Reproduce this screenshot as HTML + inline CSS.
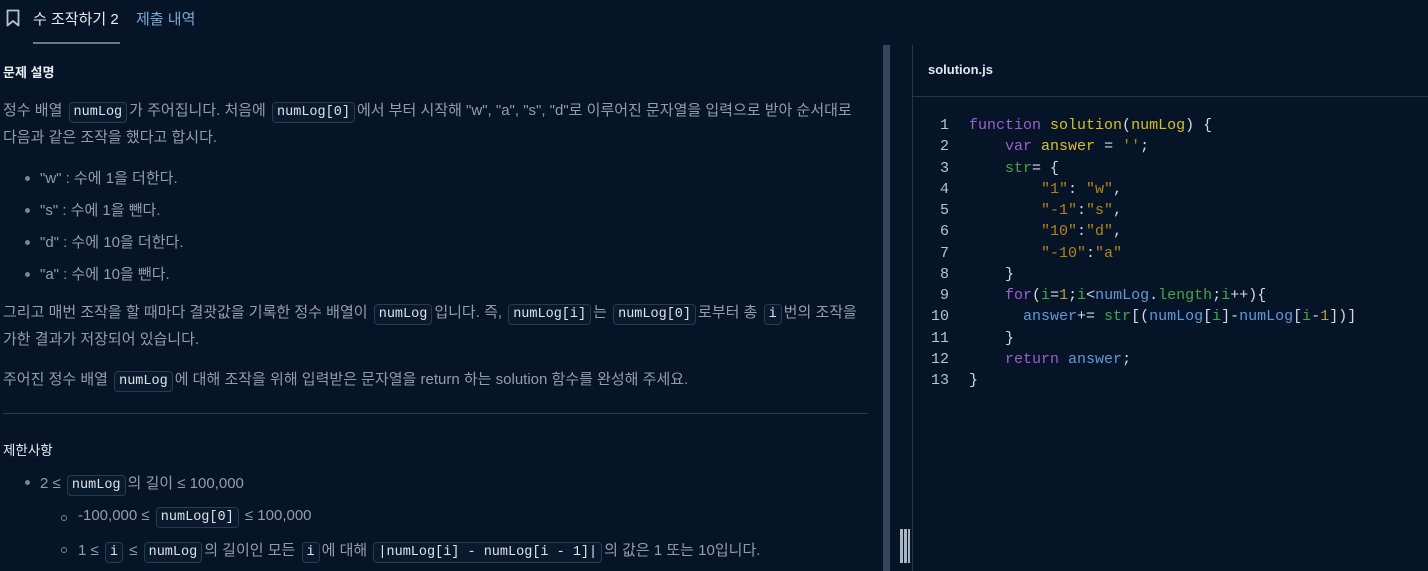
<!DOCTYPE html>
<html><head><meta charset="utf-8"><style>
*{margin:0;padding:0;box-sizing:border-box}
body{width:1428px;height:571px;overflow:hidden;background:#051427;font-family:"Liberation Sans","Noto Sans CJK KR",sans-serif;color:#949eaa;position:relative}
.abs{position:absolute;white-space:nowrap}
.tab{font-size:15px;top:8px}
code{font-family:"Liberation Mono",monospace;font-size:13.5px;color:#dde3ea;background:#0a1a2e;border:1px solid #2b3a4d;border-radius:4px;padding:2px 4px;margin:0 2px}
.p{font-size:15px;left:3px}
.li{font-size:15px}
.dot{position:absolute;width:5px;height:5px;border-radius:50%;background:#7a8592}
.cir{position:absolute;width:6px;height:6px;border-radius:50%;border:1px solid #7a8592}
.h{font-size:13px;font-weight:bold;color:#e8edf2;left:3px}
.code{position:absolute;left:920px;top:115px;font-family:"Liberation Mono",monospace;font-size:15px;line-height:21.25px;white-space:pre;color:#d3dbe3}
.ln{display:inline-block;width:29px;text-align:right;color:#b8c4d0;margin-right:20px}
.k{color:#9d5fcf}.f{color:#d8c21a}.s{color:#b5860d}.g{color:#3fa848}.b{color:#5f9ad8}.o{color:#b99d3f}
</style></head><body>
<svg class="abs" style="left:6px;top:9px" width="14" height="18" viewBox="0 0 14 18"><path d="M1.5 1.5h11v15l-5.5-4.5-5.5 4.5z" fill="none" stroke="#b8c2cc" stroke-width="1.8" stroke-linejoin="round"/></svg>
<div class="abs tab" style="left:33px;color:#e8edf2">수 조작하기 2</div>
<div class="abs tab" style="left:136px;color:#79a9d6">제출 내역</div>
<div class="abs" style="left:33px;top:42px;width:87px;height:2px;background:#6c7784"></div>

<div class="abs h" style="top:62px">문제 설명</div>
<div class="abs p" style="top:99px">정수 배열 <code>numLog</code>가 주어집니다. 처음에 <code>numLog[0]</code>에서 부터 시작해 "w", "a", "s", "d"로 이루어진 문자열을 입력으로 받아 순서대로</div>
<div class="abs p" style="top:126px">다음과 같은 조작을 했다고 합시다.</div>
<div class="dot" style="left:25px;top:176px"></div><div class="abs li" style="left:40px;top:167px">"w" : 수에 1을 더한다.</div>
<div class="dot" style="left:25px;top:208px"></div><div class="abs li" style="left:40px;top:199px">"s" : 수에 1을 뺀다.</div>
<div class="dot" style="left:25px;top:240px"></div><div class="abs li" style="left:40px;top:231px">"d" : 수에 10을 더한다.</div>
<div class="dot" style="left:25px;top:272px"></div><div class="abs li" style="left:40px;top:263px">"a" : 수에 10을 뺀다.</div>
<div class="abs p" style="top:301px">그리고 매번 조작을 할 때마다 결괏값을 기록한 정수 배열이 <code>numLog</code>입니다. 즉, <code>numLog[i]</code>는 <code>numLog[0]</code>로부터 총 <code>i</code>번의 조작을</div>
<div class="abs p" style="top:328px">가한 결과가 저장되어 있습니다.</div>
<div class="abs p" style="top:368px">주어진 정수 배열 <code>numLog</code>에 대해 조작을 위해 입력받은 문자열을 return 하는 solution 함수를 완성해 주세요.</div>
<div class="abs" style="left:3px;top:413px;width:865px;height:1px;background:#2b3a4d"></div>
<div class="abs h" style="top:439px;font-weight:normal;font-size:13.5px">제한사항</div>
<div class="dot" style="left:25px;top:480px"></div><div class="abs li" style="left:40px;top:472px">2 ≤ <code>numLog</code>의 길이 ≤ 100,000</div>
<div class="cir" style="left:61px;top:515px"></div><div class="abs li" style="left:78px;top:507px">-100,000 ≤ <code>numLog[0]</code> ≤ 100,000</div>
<div class="cir" style="left:61px;top:547px"></div><div class="abs li" style="left:78px;top:539px">1 ≤ <code>i</code> ≤ <code>numLog</code>의 길이인 모든 <code>i</code>에 대해 <code>|numLog[i] - numLog[i - 1]|</code>의 값은 1 또는 10입니다.</div>

<div class="abs" style="left:883px;top:45px;width:7px;height:526px;background:#35465b"></div>
<div class="abs" style="left:900px;top:529px;width:10px;height:34px;background:repeating-linear-gradient(90deg,#a9b6c2 0 3px,transparent 3px 4px)"></div>
<div class="abs" style="left:912px;top:45px;width:1px;height:526px;background:#263547"></div>
<div class="abs" style="left:928px;top:62px;font-size:13px;font-weight:bold;color:#e3e8ee">solution.js</div>
<div class="abs" style="left:913px;top:96px;width:515px;height:1px;background:#263547"></div>
<div class="code"><span class="ln">1</span><span class="k">function</span> <span class="f">solution</span>(<span class="f">numLog</span>) {
<span class="ln">2</span>    <span class="k">var</span> <span class="f">answer</span> = <span class="s">''</span>;
<span class="ln">3</span>    <span class="g">str</span>= {
<span class="ln">4</span>        <span class="s">"1"</span>: <span class="s">"w"</span>,
<span class="ln">5</span>        <span class="s">"-1"</span>:<span class="s">"s"</span>,
<span class="ln">6</span>        <span class="s">"10"</span>:<span class="s">"d"</span>,
<span class="ln">7</span>        <span class="s">"-10"</span>:<span class="s">"a"</span>
<span class="ln">8</span>    }
<span class="ln">9</span>    <span class="k">for</span>(<span class="g">i</span>=<span class="o">1</span>;<span class="g">i</span>&lt;<span class="b">numLog</span>.<span class="g">length</span>;<span class="g">i</span>++){
<span class="ln">10</span>      <span class="b">answer</span>+= <span class="g">str</span>[(<span class="b">numLog</span>[<span class="g">i</span>]-<span class="b">numLog</span>[<span class="g">i</span>-<span class="o">1</span>])]
<span class="ln">11</span>    }
<span class="ln">12</span>    <span class="k">return</span> <span class="b">answer</span>;
<span class="ln">13</span>}</div>
</body></html>
